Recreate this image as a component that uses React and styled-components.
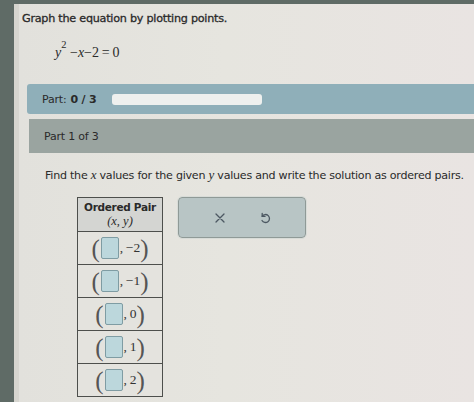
import React from "react";
import styled, { createGlobalStyle } from "styled-components";

const Global = createGlobalStyle`
  html, body {
    margin: 0;
    padding: 0;
    background: #5f6b66;
    width: 474px;
    height: 402px;
    overflow: hidden;
  }
  body {
    font-family: "DejaVu Sans", Verdana, sans-serif;
    color: #2a2a2a;
  }
`;

const Screen = styled.div`
  padding: 4px 0 0 14px;
  height: 402px;
  box-sizing: border-box;
`;

const Page = styled.div`
  background: linear-gradient(90deg, #e2e1dc 0%, #e6e5df 45%, #e9e4e2 100%);
  border-left: 5px solid #d6d5cf;
  height: 100%;
  box-sizing: border-box;
  padding-top: 8px;
`;

const Title = styled.div`
  font-size: 11.2px;
  letter-spacing: -0.25px;
  -webkit-text-stroke: 0.3px #2a2a2a;
  padding-left: 3px;
  line-height: 14px;
`;

const Equation = styled.div`
  font-family: "Liberation Serif", "Times New Roman", serif;
  font-size: 14px;
  padding: 16px 0 0 36px;
  height: 34px;
  box-sizing: border-box;
  i { font-style: italic; }
  sup { font-size: 10.5px; position: relative; top: -3px; margin-left: 0; }
`;

const PartBar = styled.div`
  margin: 24px 0 0 8px;
  height: 30px;
  background: #8fafb9;
  border-radius: 3px 0 0 3px;
  display: flex;
  align-items: center;
  padding-left: 15px;
  font-size: 11px;
  letter-spacing: -0.2px;
  b { font-weight: bold; margin-left: 4px; }
`;

const Progress = styled.div`
  margin-left: 16px;
  width: 150px;
  height: 11px;
  background: #eef0ee;
  border-radius: 3px;
`;

const SectionBar = styled.div`
  margin: 5px 0 0 10px;
  height: 34px;
  background: #9aa4a0;
  display: flex;
  align-items: center;
  padding-left: 15px;
  font-size: 11px;
  letter-spacing: -0.2px;
`;

const Body = styled.div`
  padding: 14px 0 0 26px;
`;

const Prompt = styled.div`
  font-size: 11.1px;
  letter-spacing: -0.25px;
  i {
    font-family: "Liberation Serif", serif;
    font-size: 13px;
  }
`;

const Row = styled.div`
  display: flex;
  align-items: flex-start;
  gap: 15px;
  margin: 14px 0 0 58px;
`;

const Table = styled.table`
  border-collapse: collapse;
  width: 86px;
  td, th {
    border: 1px solid #4d4f4c;
    text-align: center;
    padding: 0;
  }
`;

const Head = styled.th`
  background: #d4d5d2;
  height: 33px;
  font-size: 10.5px;
  letter-spacing: -0.3px;
  font-weight: bold;
  line-height: 13px;
  span {
    display: block;
    font-family: "Liberation Serif", serif;
    font-weight: normal;
    font-size: 12.5px;
    line-height: 15px;
    font-style: italic;
    letter-spacing: 0;
  }
`;

const Cell = styled.td`
  height: 32px;
  background: #e4e3de;
`;

const Pair = styled.span`
  display: inline-flex;
  align-items: center;
  font-family: "Liberation Serif", serif;
  font-size: 13.5px;
  color: #333;
  .paren { font-size: 25px; font-weight: 300; color: #555; line-height: 1; }
`;

const InputBox = styled.span`
  display: inline-block;
  width: 16px;
  height: 20px;
  background: #bcd7dc;
  border: 1px solid #7f9ca3;
  border-radius: 2px;
  margin: 0 1px;
`;

const Tools = styled.div`
  width: 128px;
  height: 41px;
  border: 1px solid #8f9a97;
  outline: 1px solid #d8dcd8;
  border-radius: 4px;
  background: #b8c5c5;
  display: flex;
  align-items: center;
  justify-content: space-around;
  padding: 0 18px;
  box-sizing: border-box;
`;

const Icon = styled.svg`
  width: 12px;
  height: 12px;
  stroke: #4c5862;
  fill: none;
  stroke-width: 1.3;
  stroke-linecap: round;
`;

const ys = ["\u22122", "\u22121", "0", "1", "2"];

export default function App() {
  return (
    <>
      <Global />
      <Screen>
        <Page>
          <Title>Graph the equation by plotting points.</Title>
          <Equation>
            <i>y</i><sup>2</sup> &minus;<i>x</i>&minus;2&thinsp;=&thinsp;0
          </Equation>
          <PartBar>
            Part: <b>0 / 3</b>
            <Progress />
          </PartBar>
          <SectionBar>Part 1 of 3</SectionBar>
          <Body>
            <Prompt>
              Find the <i>x</i> values for the given <i>y</i> values and write the solution as ordered pairs.
            </Prompt>
          </Body>
          <Row>
            <Table>
              <thead>
                <tr>
                  <Head>
                    Ordered Pair
                    <span>(x, y)</span>
                  </Head>
                </tr>
              </thead>
              <tbody>
                {ys.map((y) => (
                  <tr key={y}>
                    <Cell>
                      <Pair>
                        <span className="paren">(</span>
                        <InputBox />
                        ,&thinsp;{y}
                        <span className="paren">)</span>
                      </Pair>
                    </Cell>
                  </tr>
                ))}
              </tbody>
            </Table>
            <Tools>
              <Icon viewBox="0 0 12 12">
                <path d="M2 2 L10 10 M10 2 L2 10" />
              </Icon>
              <Icon viewBox="0 0 12 12">
                <path d="M3.2 4.2 A4 4 0 1 1 3 8.5" />
                <path d="M3.2 1.5 L3.2 4.4 L6 4.4" />
              </Icon>
            </Tools>
          </Row>
        </Page>
      </Screen>
    </>
  );
}
